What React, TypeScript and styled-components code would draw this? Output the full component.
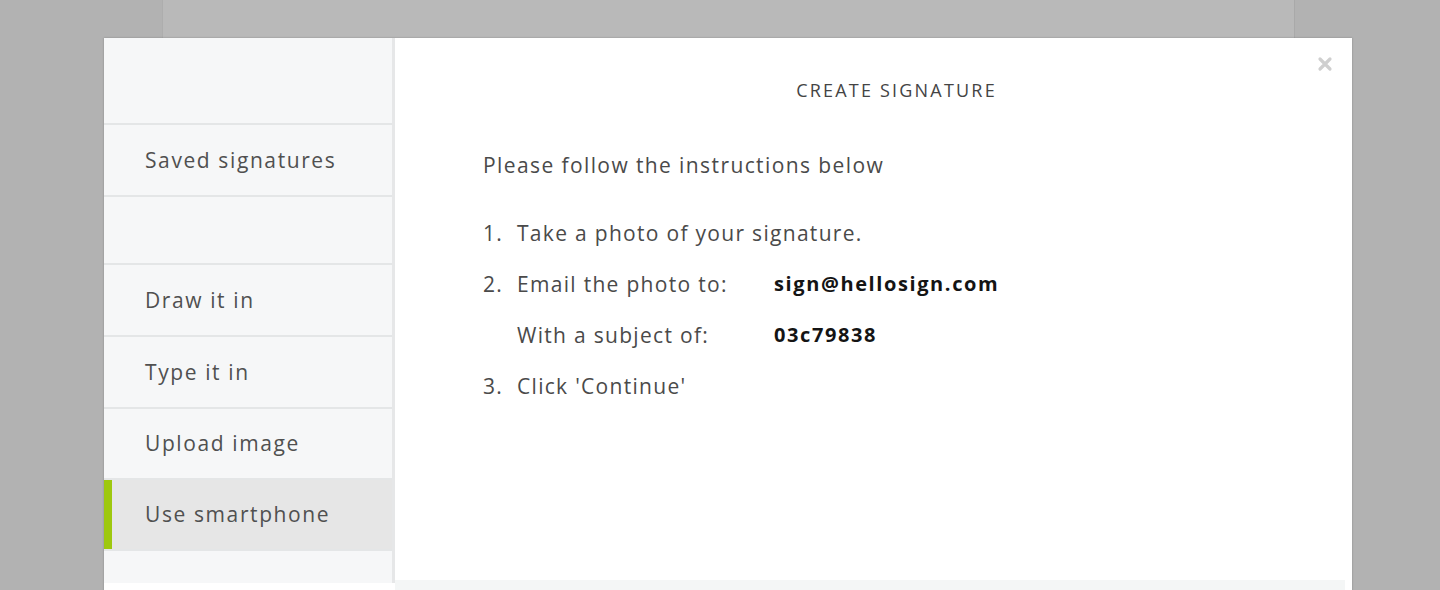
import React from "react";
import styled, { createGlobalStyle } from "styled-components";

const Global = createGlobalStyle`
  html, body { margin: 0; padding: 0; height: 100%; overflow: hidden; }
  body { background: #b2b2b2; font-family: "Open Sans", Lato, sans-serif; }
  #root { height: 100%; }
`;

const Backdrop = styled.div`
  position: relative;
  height: 590px;
  display: flex;
  justify-content: flex-start;
`;

const DocumentSheet = styled.div`
  margin-left: 162px;
  width: 1133px;
  height: 100%;
  background: #b9b9b9;
  border-left: 1px solid #adadad;
  border-right: 1px solid #a9a9a9;
  box-sizing: border-box;
`;

const Modal = styled.div`
  position: absolute;
  left: 104px;
  top: 38px;
  width: 1248px;
  height: 580px;
  background: #fff;
  display: flex;
  box-shadow: 0 0 2px rgba(0, 0, 0, 0.25);
`;

const Sidebar = styled.nav`
  width: 291px;
  box-sizing: border-box;
  flex: none;
  background: #f6f7f8;
  border-right: 3px solid #e6e7e8;
  display: flex;
  flex-direction: column;
  height: 545px;
`;

const SidebarTop = styled.div`
  height: 85px;
`;

const NavItem = styled.div<{ $active?: boolean; $h?: number }>`
  height: ${(p) => p.$h ?? 70}px;
  border-top: 2px solid #e4e6e7;
  display: flex;
  align-items: center;
  padding-left: 41px;
  padding-bottom: 1px;
  box-sizing: content-box;
  font-size: 21px;
  letter-spacing: 1.6px;
  color: #505050;
  position: relative;
  background: ${(p) => (p.$active ? "#e6e6e6" : "transparent")};
  &::before {
    content: "";
    display: ${(p) => (p.$active ? "block" : "none")};
    position: absolute;
    left: 0;
    top: 0;
    bottom: 0;
    width: 8px;
    background: #9ec80f;
  }
`;

const SidebarRest = styled.div`
  border-top: 2px solid #e4e6e7;
  flex: 1;
`;

const Main = styled.section`
  flex: 1;
  display: flex;
  flex-direction: column;
  position: relative;
`;

const Content = styled.div`
  height: 542px;
  padding: 0 0 0 88px;
  box-sizing: border-box;
`;

const Footer = styled.div`
  flex: 1;
  background: #f4f6f6;
  margin-right: 7px;
`;

const Title = styled.h1`
  margin: 0;
  padding: 41px 0 0 0;
  margin-left: -42px;
  text-align: center;
  font-size: 18px;
  font-weight: 400;
  letter-spacing: 2.2px;
  color: #444;
  line-height: 22px;
`;

const Close = styled.button`
  position: absolute;
  top: 16px;
  right: 17px;
  border: 0;
  background: none;
  padding: 0;
  width: 20px;
  height: 20px;
  display: flex;
  align-items: center;
  justify-content: center;
  cursor: pointer;
`;

const Intro = styled.p`
  margin: 51px 0 0;
  font-size: 21px;
  letter-spacing: 1.4px;
  color: #4a4a4a;
  line-height: 26px;
`;

const Steps = styled.div`
  margin-top: 29px;
  display: grid;
  grid-template-columns: 34px 257px auto;
  grid-template-rows: 51px 51px 51px 52px;
  align-items: center;
  font-size: 21px;
  letter-spacing: 1.3px;
  color: #4a4a4a;
`;

const Num = styled.span``;
const Label = styled.span<{ $wide?: boolean }>`
  grid-column: ${(p) => (p.$wide ? "2 / 4" : "auto")};
  white-space: nowrap;
`;
const Value = styled.span`
  font-size: 20px;
  font-weight: 700;
  color: #141414;
  letter-spacing: 1.6px;
`;

const CloseIcon = () => (
  <svg width="16" height="16" viewBox="0 0 16 16">
    <path d="M3 3 L13 13 M13 3 L3 13" stroke="#cfcfcf" strokeWidth="3.2" strokeLinecap="round" />
  </svg>
);

export default function App() {
  return (
    <>
      <Global />
      <Backdrop>
        <DocumentSheet />
        <Modal>
          <Sidebar>
            <SidebarTop />
            <NavItem $h={69}>Saved signatures</NavItem>
            <NavItem $h={65} />
            <NavItem $h={69}>Draw it in</NavItem>
            <NavItem $h={69}>Type it in</NavItem>
            <NavItem $h={68}>Upload image</NavItem>
            <NavItem $active $h={68}>Use smartphone</NavItem>
            <SidebarRest />
          </Sidebar>
          <Main>
            <Close aria-label="Close"><CloseIcon /></Close>
            <Content>
              <Title>CREATE SIGNATURE</Title>
              <Intro>Please follow the instructions below</Intro>
              <Steps>
                <Num>1.</Num>
                <Label $wide>Take a photo of your signature.</Label>
                <Num>2.</Num>
                <Label>Email the photo to:</Label>
                <Value>sign@hellosign.com</Value>
                <span />
                <Label>With a subject of:</Label>
                <Value>03c79838</Value>
                <Num>3.</Num>
                <Label $wide>Click 'Continue'</Label>
              </Steps>
            </Content>
            <Footer />
          </Main>
        </Modal>
      </Backdrop>
    </>
  );
}
